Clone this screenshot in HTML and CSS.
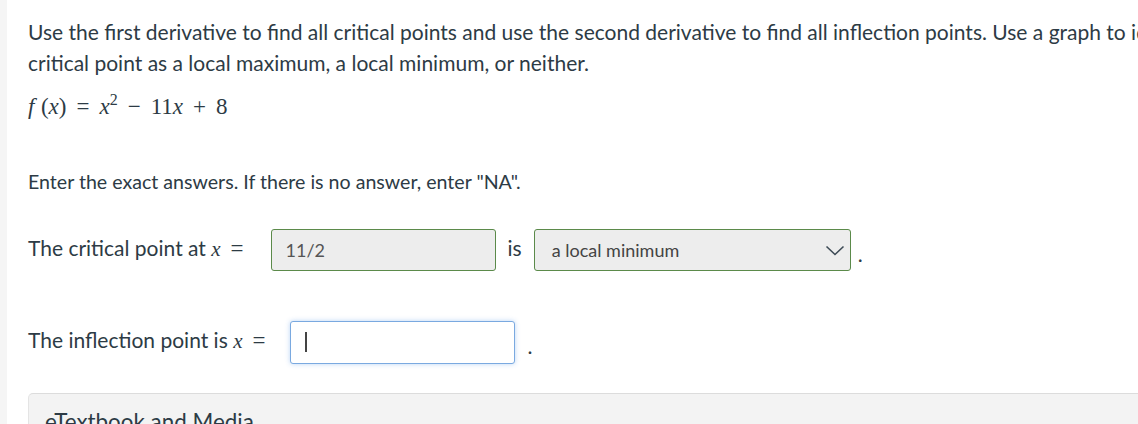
FILE: index.html
```html
<!DOCTYPE html>
<html>
<head>
<meta charset="utf-8">
<link rel="stylesheet" href="styles.css">
</head>
<body>
<div class="page">
  <div class="gutter"></div>
  <div class="content">
    <p class="question">Use the first derivative to find all critical points and use the second derivative to find all inflection points. Use a graph to identify each critical point as a local maximum, a local minimum, or neither.</p>
    <div class="math-line"><span class="m"><i>f</i>&#8201;&#8202;(<i>x</i>)</span><span class="op">=</span><span class="m"><i>x</i><sup>2</sup></span><span class="op">−</span><span class="m">11<i>x</i></span><span class="op">+</span><span class="m">8</span></div>
    <p class="instr">Enter the exact answers. If there is no answer, enter "NA".</p>
    <div class="row row1">
      <span class="label">The critical point at <span class="mx"><i>x</i></span><span class="eq">=</span></span>
      <div class="field answered">11/2</div>
      <span class="is">is</span>
      <div class="select answered">
        <span>a local minimum</span>
        <svg class="chev" width="20" height="11" viewBox="0 0 20 11"><path d="M1.5 1.5 L10 9.5 L18.5 1.5" fill="none" stroke="#3d4a55" stroke-width="1.6"/></svg>
      </div>
      <span class="dot">.</span>
    </div>
    <div class="row row2">
      <span class="label">The inflection point is <span class="mx"><i>x</i></span><span class="eq">=</span></span>
      <div class="field focus"><span class="caret"></span></div>
      <span class="dot">.</span>
    </div>
    <div class="panel">
      <div class="panel-title">eTextbook and Media</div>
    </div>
  </div>
</div>
</body>
</html>
```
FILE: styles.css
```css
html, body {
  margin: 0;
  padding: 0;
  background: #ffffff;
  overflow: hidden;
}
body {
  font-family: Lato, "Liberation Sans", sans-serif;
  color: #2d3b45;
}
.page {
  display: flex;
  height: 424px;
}
.gutter {
  width: 7px;
  flex: none;
  background: #f5f5f5;
}
.content {
  flex: none;
  width: 1275px;
  padding: 16px 0 0 21px;
}
.question {
  margin: 0;
  font-size: 21px;
  line-height: 31px;
}
.math-line {
  margin-top: 14px;
  height: 30px;
  line-height: 30px;
  font-family: "Liberation Serif", "DejaVu Serif", serif;
  font-size: 23px;
  color: #2d3b45;
  display: flex;
  align-items: baseline;
}
.math-line sup {
  font-size: 16px;
  line-height: 0;
  vertical-align: 9px;
}
.math-line .op {
  margin: 0 10px;
}
.instr {
  margin: 45px 0 0;
  font-size: 19.6px;
  line-height: 30px;
}
.row {
  display: flex;
  align-items: center;
  height: 42px;
  font-size: 21px;
}
.row1 {
  margin-top: 32px;
}
.row2 {
  margin-top: 50px;
}
.label {
  white-space: nowrap;
  margin-bottom: 4px;
}
.mx {
  font-family: "Liberation Serif", serif;
  font-size: 21px;
}
.eq {
  font-family: "Liberation Serif", serif;
  font-size: 23px;
  margin-left: 10px;
}
.field {
  box-sizing: border-box;
  width: 225px;
  height: 42px;
  border-radius: 3px;
  display: flex;
  align-items: center;
  padding-left: 14px;
  font-size: 18px;
  color: #555;
}
.row1 .field {
  margin-left: 27px;
}
.row2 .field {
  margin-left: 25px;
  height: 43px;
}
.answered {
  background: #ededed;
  border: 1px solid #5b8a4a;
}
.focus {
  background: #fff;
  border: 1px solid #7aa9e0;
  box-shadow: 0 0 5px rgba(102, 160, 230, 0.45);
}
.caret {
  width: 2px;
  height: 20px;
  background: #444;
}
.is {
  margin-left: 12px;
  margin-right: 12px;
  margin-bottom: 6px;
}
.select {
  box-sizing: border-box;
  width: 317px;
  height: 42px;
  border-radius: 3px;
  display: flex;
  align-items: center;
  justify-content: space-between;
  padding: 0 5px 0 17px;
  font-size: 18px;
  color: #444;
}
.dot {
  margin-left: 7px;
  margin-top: 6px;
}
.row2 .dot {
  margin-left: 12px;
}
.panel {
  margin-top: 30px;
  height: 60px;
  background: #f3f3f3;
  border-top: 1px solid #dcdcdc;
  border-left: 1px solid #e4e4e4;
  border-top-left-radius: 5px;
  padding: 16px 0 0 16px;
  box-sizing: border-box;
}
.panel-title {
  font-size: 22.4px;
  color: #2d3b45;
  line-height: 24px;
}
```
